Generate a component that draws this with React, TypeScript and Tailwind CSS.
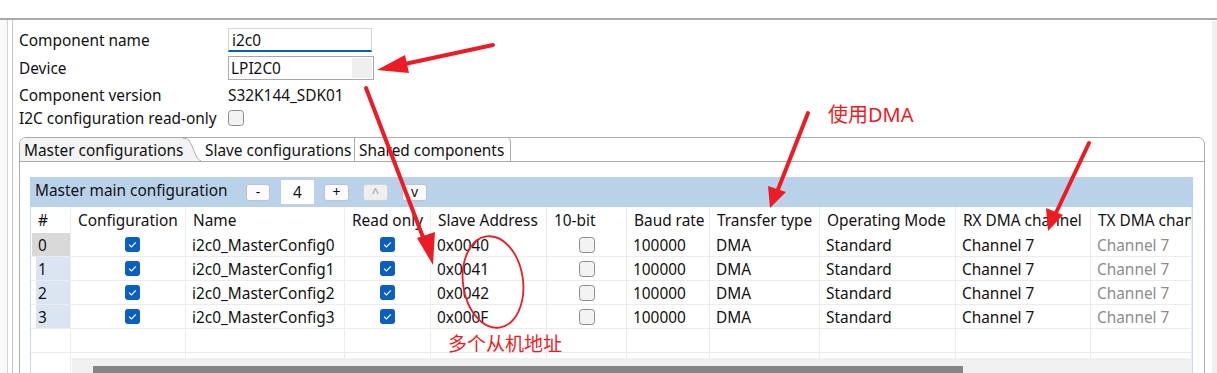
import React from "react";

const COLS = "grid-cols-[40px_115px_159px_86px_116px_80px_83px_110px_136px_135px_101px]";

function CheckOn() {
  return (
    <svg width="15" height="15" viewBox="0 0 15 15">
      <rect x="0" y="0" width="15" height="15" rx="3" fill="#0a5fc0" />
      <polyline points="4.2,7.8 6.5,10 10.8,5.4" fill="none" stroke="#ffffff" strokeWidth="1.2" />
    </svg>
  );
}

function CheckOff() {
  return (
    <svg width="16" height="16" viewBox="0 0 16 16">
      <rect x="0.5" y="0.5" width="15" height="15" rx="3" fill="#f3f3f3" stroke="#8a8a8a" />
    </svg>
  );
}

const headers = [
  "#",
  "Configuration",
  "Name",
  "Read only",
  "Slave Address",
  "10-bit",
  "Baud rate",
  "Transfer type",
  "Operating Mode",
  "RX DMA channel",
  "TX DMA channel",
];

const rows = [
  { n: "0", name: "i2c0_MasterConfig0", addr: "0x0040" },
  { n: "1", name: "i2c0_MasterConfig1", addr: "0x0041" },
  { n: "2", name: "i2c0_MasterConfig2", addr: "0x0042" },
  { n: "3", name: "i2c0_MasterConfig3", addr: "0x000F" },
];

function Cell({ children, className = "" }: { children?: React.ReactNode; className?: string }) {
  return (
    <div className={"border-r border-[#ececec] flex items-center whitespace-nowrap overflow-hidden pt-[2px] pl-[6px] " + className}>
      {children}
    </div>
  );
}

export default function App() {
  return (
    <div className="relative w-[1217px] h-[373px] overflow-hidden bg-white text-[15.4px] leading-none text-[#111] font-['Noto_Sans',sans-serif]">
      <div className="h-[18px]" />
      <div className="h-[2px] bg-[#a9a9a9]" />
      <div className="flex h-[420px]">
        <div className="w-[8px] border-r border-[#d4d4d4] rounded-tl-[5px] bg-[#fafafa]" />
        <div className="w-[4px]" />
        <div className="w-px bg-[#c4c4c4]" />
        <div className="flex-1 pl-[6px] pr-[7px]">
          {/* form */}
          <div className="pt-[8px]">
            <div className="flex items-center h-[24px]">
              <div className="w-[209px] pt-[2px]">Component name</div>
              <div className="w-[144px] h-[24px] border border-[#d6d6d6] border-b-2 border-b-[#0063b8] flex items-center pl-[3px] pt-[2px]">i2c0</div>
            </div>
            <div className="flex items-center h-[24px] mt-[4px]">
              <div className="w-[209px] pt-[2px]">Device</div>
              <div className="w-[146px] h-[24px] border border-[#a8a8a8] flex items-stretch">
                <div className="flex-1 flex items-center pl-[2px] pt-[2px]">LPI2C0</div>
                <div className="w-[20px] bg-[#efefef] my-px mr-px" />
              </div>
            </div>
            <div className="flex items-center h-[24px] mt-[3px]">
              <div className="w-[209px] pt-[2px]">Component version</div>
              <div className="pt-[2px]">S32K144_SDK01</div>
            </div>
            <div className="flex items-center h-[22px]">
              <div className="w-[209px] pt-[2px]">I2C configuration read-only</div>
              <CheckOff />
            </div>
          </div>

          {/* tab folder */}
          <div className="mt-[8px] h-[300px] border border-[#acacac] rounded-t-[7px]">
            <div className="flex h-[24px] border-b border-[#acacac]">
              <div className="relative w-[180px] bg-[#f3f3f3] flex items-center pl-[4px] pt-[2px] rounded-tl-[6px] whitespace-nowrap">
                Master configurations
                <svg className="absolute right-[-1px] top-0" width="18" height="23" viewBox="0 0 18 23">
                  <path d="M0,0 C6,0 6,2 9,8 C12,15 14,22.5 18,22.5 L18,0 Z" fill="#ffffff" />
                  <path d="M0,0.5 C6,0.5 6,2 9,8 C12,15 14,22.5 18,22.5" fill="none" stroke="#acacac" />
                </svg>
              </div>
              <div className="w-[155px] border-r border-[#acacac] flex items-center pl-[5px] pt-[2px] whitespace-nowrap">Slave configurations</div>
              <div className="w-[156px] border-r border-[#acacac] rounded-tr-[4px] flex items-center pl-[4px] pt-[2px] whitespace-nowrap">Shared components</div>
              <div className="flex-1" />
            </div>
            <div className="pt-[15px] pl-[10px] pr-[11px]">
              {/* master main configuration bar */}
              <div className="h-[30px] bg-[#bad1ea] flex items-center pl-[5px]">
                <div className="w-[211px] -mt-[2px] whitespace-nowrap">Master main configuration</div>
                <div className="w-[24px] h-[17px] bg-[#fbfbfb] border border-[#c2c2c2] rounded-[3px] flex items-center justify-center text-[14px]">-</div>
                <div className="ml-[11px] w-[33px] h-[25px] bg-white border-b border-[#d0d0d0] flex items-center justify-center pt-[2px]">4</div>
                <div className="ml-[10px] w-[25px] h-[17px] bg-[#fbfbfb] border border-[#c2c2c2] rounded-[3px] flex items-center justify-center text-[14px]">+</div>
                <div className="ml-[14px] w-[25px] h-[17px] bg-[#efefef] border border-[#d2d2d2] rounded-[3px] flex items-center justify-center text-[13px] text-[#a0a0a0]">^</div>
                <div className="ml-[14px] w-[25px] h-[17px] bg-[#fbfbfb] border border-[#c2c2c2] rounded-[3px] flex items-center justify-center text-[14px]">v</div>
              </div>
              {/* table */}
              <div className="border-l border-r border-[#c9d9ec] h-[220px] relative">
                <div className={"grid h-[26px] " + COLS}>
                  {headers.map((h, i) => (
                    <Cell key={i} className="pl-[7px]">{h}</Cell>
                  ))}
                </div>
                {rows.map((r, ri) => (
                  <div key={ri} className={"grid h-[24px] border-b border-[#ececec] " + COLS}>
                    <div className="border-r border-[#ececec] flex items-stretch">
                      <div className={ri === 0 ? "flex-1 bg-[#d9d9d9] ml-px flex items-center pl-[6px] pt-[2px]" : "flex-1 bg-[#dbe5f2] ml-[5px] flex items-center pl-[2px] pt-[2px]"}>{r.n}</div>
                    </div>
                    <div className="border-r border-[#ececec] flex items-center justify-center pl-[9px]"><CheckOn /></div>
                    <Cell>{r.name}</Cell>
                    <div className="border-r border-[#ececec] flex items-center justify-center"><CheckOn /></div>
                    <Cell>{r.addr}</Cell>
                    <div className="border-r border-[#ececec] flex items-center justify-center"><CheckOff /></div>
                    <Cell>100000</Cell>
                    <Cell>DMA</Cell>
                    <Cell>Standard</Cell>
                    <Cell>Channel 7</Cell>
                    <Cell className="text-[#8c8c8c]">Channel 7</Cell>
                  </div>
                ))}
                {[0, 1].map((k) => (
                  <div key={k} className={"grid h-[24px] border-b border-[#ececec] " + COLS}>
                    {headers.map((_, i) => (
                      <div key={i} className="border-r border-[#ececec]" />
                    ))}
                  </div>
                ))}
                <div className="absolute left-[41px] right-0 top-[151px] h-[30px] bg-[#f0f0f0]">
                  <div className="absolute left-[21px] w-[870px] top-[8px] h-[8px] bg-[#858585]" />
                </div>
              </div>
            </div>
          </div>
        </div>
        <div className="w-[5px] bg-[#f0f0f0] mt-px" />
      </div>

      {/* annotation overlay */}
      <svg className="absolute left-0 top-0 pointer-events-none" width="1217" height="373" viewBox="0 0 1217 373">
        <g stroke="#ec1c24" strokeWidth="4" strokeLinecap="round" fill="none">
          <line x1="493" y1="45" x2="400" y2="65" />
          <line x1="366" y1="88" x2="426" y2="245" />
          <line x1="808" y1="113" x2="777" y2="192" />
          <line x1="1089" y1="143" x2="1055" y2="215" />
        </g>
        <g fill="#ec1c24">
          <polygon points="377,70 409,73 405,55" />
          <polygon points="433,265 417,238 435,232" />
          <polygon points="770,208 768,186 786,192" />
          <polygon points="1048,231 1046,208 1063,215" />
        </g>
        <ellipse cx="493" cy="282" rx="30" ry="46" transform="rotate(-8 493 282)" fill="none" stroke="#ec1c24" strokeWidth="1.8" />
      </svg>
      <div className="absolute left-[828px] top-[105px] text-[20px] leading-none text-[#ec1c24] font-['Noto_Sans','Noto_Sans_CJK_SC',sans-serif]">使用DMA</div>
      <div className="absolute left-[448px] top-[333px] text-[19px] leading-none text-[#ec1c24] font-['Noto_Sans_CJK_SC',sans-serif]">多个从机地址</div>
    </div>
  );
}
